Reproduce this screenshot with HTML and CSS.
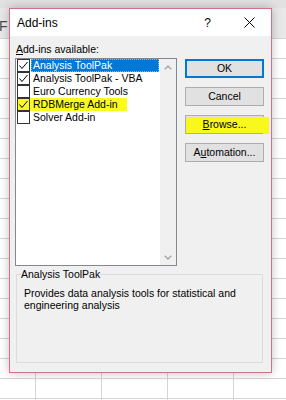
FILE: index.html
```html
<!DOCTYPE html>
<html>
<head>
<meta charset="utf-8">
<title>Add-ins</title>
<link rel="stylesheet" href="styles.css">
</head>
<body>
<div class="sheet">
  <div class="topstrip"></div>
  <div class="colhead"><span class="colletter">F</span></div>
  <div class="cells"></div>

  <div class="dialog">
    <div class="titlebar">
      <span class="title">Add-ins</span>
      <span class="help">?</span>
      <svg class="close" width="11" height="11" viewBox="0 0 11 11"><path d="M0.5 0.5L10.5 10.5M10.5 0.5L0.5 10.5"/></svg>
    </div>
    <div class="content">
      <div class="main">
        <div class="label"><u>A</u>dd-ins available:</div>
        <div class="listbox">
          <div class="items">
            <div class="item selected">
              <span class="cb"><svg class="tick" width="11" height="11" viewBox="0 0 11 11"><path d="M1.5 5.5L4 8.5L9.5 2"/></svg></span>
              <span class="name">Analysis ToolPak</span>
            </div>
            <div class="item">
              <span class="cb"><svg class="tick" width="11" height="11" viewBox="0 0 11 11"><path d="M1.5 5.5L4 8.5L9.5 2"/></svg></span>
              <span class="name">Analysis ToolPak - VBA</span>
            </div>
            <div class="item">
              <span class="cb"></span>
              <span class="name">Euro Currency Tools</span>
            </div>
            <div class="item marked">
              <span class="mark">
                <span class="cb"><svg class="tick" width="11" height="11" viewBox="0 0 11 11"><path d="M1.5 5.5L4 8.5L9.5 2"/></svg></span>
                <span class="name">RDBMerge Add-in</span>
              </span>
            </div>
            <div class="item">
              <span class="cb"></span>
              <span class="name">Solver Add-in</span>
            </div>
          </div>
          <div class="scrollbar">
            <div class="arrow"><svg width="8" height="5" viewBox="0 0 8 5"><path d="M0.8 4.2L4 1L7.2 4.2"/></svg></div>
            <div class="arrow"><svg width="8" height="5" viewBox="0 0 8 5"><path d="M0.8 0.8L4 4L7.2 0.8"/></svg></div>
          </div>
        </div>
        <div class="buttons">
          <button class="btn default">OK</button>
          <button class="btn">Cancel</button>
          <button class="btn browse"><span class="btntext"><u>B</u>rowse...</span></button>
          <button class="btn">A<u>u</u>tomation...</button>
        </div>
      </div>
      <fieldset class="group">
        <legend>Analysis ToolPak</legend>
        <p class="desc">Provides data analysis tools for statistical and engineering analysis</p>
      </fieldset>
    </div>
  </div>
</div>
</body>
</html>
```
FILE: styles.css
```css
* { box-sizing: border-box; }
html, body { margin: 0; padding: 0; }
body {
  width: 286px;
  height: 400px;
  overflow: hidden;
  background: #fff;
  font-family: "Liberation Sans", Arial, sans-serif;
  font-size: 10.5px;
  color: #000;
}
.sheet {
  position: relative;
  width: 286px;
  height: 400px;
  display: flex;
  flex-direction: column;
}
.topstrip { height: 8px; background: #e1e1e1; }
.colhead {
  height: 30px;
  background: #e8e8e8;
  display: flex;
  align-items: center;
}
.colletter {
  font-size: 14px;
  color: #4a4a4a;
  margin-left: -1px;
  margin-top: 5px;
}
.cells {
  flex: 1;
  background-color: #fff;
  background-image:
    repeating-linear-gradient(to bottom, #d4d4d4 0 1px, transparent 1px 20px),
    repeating-linear-gradient(to right, transparent 0 35px, #d4d4d4 35px 36px, transparent 36px 66px);
}

/* dialog window */
.dialog {
  position: absolute;
  left: 9px;
  top: 8px;
  width: 263px;
  height: 365px;
  background: #f0f0f0;
  border: 1px solid #d0718b;
  box-shadow: 0 0 9px rgba(0, 0, 0, 0.25);
  display: flex;
  flex-direction: column;
}
.titlebar {
  height: 27px;
  flex: none;
  background: #fff;
  display: flex;
  align-items: center;
  padding: 0 16px 0 7px;
}
.title { font-size: 12px; }
.help { font-size: 12px; margin-left: auto; margin-right: 33px; }
.close { display: block; }
.close path { stroke: #000; stroke-width: 1; fill: none; }

.content {
  flex: 1;
  display: flex;
  flex-direction: column;
  padding: 6px 7px 9px 5px;
}
.main {
  display: grid;
  grid-template-columns: 162px 79px;
  column-gap: 8px;
}
.label {
  grid-column: 1 / 3;
  margin-left: 1px;
  line-height: 14px;
  margin-bottom: 2px;
}
.listbox {
  height: 208px;
  border: 1px solid #828790;
  background: #fff;
  display: flex;
}
.items { flex: 1; }
.item {
  height: 13px;
  display: flex;
  align-items: center;
  line-height: 13px;
}
.cb {
  width: 13px;
  height: 13px;
  margin-left: 1px;
  border: 1px solid #333;
  background: #fff;
  flex: none;
  display: flex;
  align-items: center;
  justify-content: center;
}
.tick path { stroke: #000; stroke-width: 1; fill: none; }
.name {
  margin-left: 1px;
  padding-left: 2px;
  white-space: nowrap;
}
.selected .name {
  flex: 1;
  margin-right: 1px;
  background: #0078d7;
  color: #fff;
  outline: 1px dotted #e8a07a;
  outline-offset: -1px;
}
.mark {
  display: flex;
  align-items: center;
  margin-left: 1px;
  padding-right: 9px;
  background: #fafa1e;
}
.mark .cb { margin-left: 0; background: transparent; }

.scrollbar {
  width: 16px;
  background: #f0f0f0;
  display: flex;
  flex-direction: column;
  justify-content: space-between;
}
.arrow {
  height: 16px;
  display: flex;
  align-items: center;
  justify-content: center;
}
.arrow svg { display: block; }
.arrow path { stroke: #a6a6a6; stroke-width: 1.4; fill: none; }

.buttons {
  display: flex;
  flex-direction: column;
  gap: 9px;
  padding-top: 1px;
}
.btn {
  height: 19px;
  padding: 0;
  border: 1px solid #adadad;
  background: #e1e1e1;
  font-family: inherit;
  font-size: 10.5px;
  color: #000;
  line-height: 17px;
  text-align: center;
}
.btn.default {
  border-color: #0078d7;
  box-shadow: inset 0 0 0 1px #0078d7;
}
.btn.browse {
  position: relative;
  background: linear-gradient(to bottom, #e1e1e1 0 1px, #f8f81c 1px);
}
.btn.browse::after {
  content: "";
  position: absolute;
  top: 1px;
  bottom: -1px;
  right: -6px;
  width: 6px;
  background: #f8f81c;
}
.btntext { position: relative; }

.group {
  flex: 1;
  margin: 1px 1px 0 1px;
  padding: 0 7px;
  border: 1px solid #dcdcdc;
  min-width: 0;
}
.group legend {
  padding: 0;
  margin-left: -3px;
  line-height: 14px;
}
.desc {
  margin: 6px 0 0;
  line-height: 12px;
}
```
